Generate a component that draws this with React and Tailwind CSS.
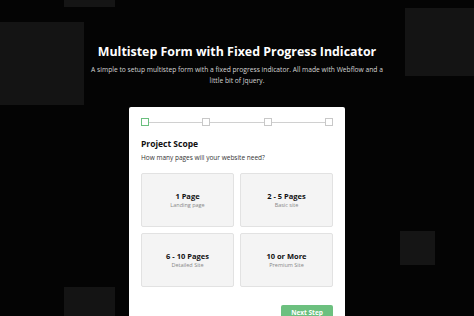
// multistep form landing preview
import React from 'react'

const options = [
    { title: '1 Page', sub: 'Landing page' },
    { title: '2 - 5 Pages', sub: 'Basic site' },
    { title: '6 - 10 Pages', sub: 'Detailed Site' },
    { title: '10 or More', sub: 'Premium Site' },
]

export default function App() {
    return (
        <div
            className="relative w-[474px] h-[316px] overflow-hidden bg-[#040404]"
            style={{ fontFamily: '"Open Sans", "Noto Sans", sans-serif' }}
        >
            {/* 배경 장식 사각형 */}
            <div className="absolute left-[64px] top-0 w-[51px] h-[7px] bg-[#151515]" />
            <div className="absolute left-0 top-[22px] w-[84px] h-[83px] bg-[#141414]" />
            <div className="absolute left-[405px] top-[8px] w-[69px] h-[68px] bg-[#141414]" />
            <div className="absolute left-[64px] top-[287px] w-[51px] h-[29px] bg-[#141414]" />
            <div className="absolute left-[400px] top-[231px] w-[35px] h-[34px] bg-[#151515]" />

            <div className="relative flex flex-col items-center pt-[41px]">
                <h1 className="text-[12.4px] font-bold text-white leading-[22px]">
                    Multistep Form with Fixed Progress Indicator
                </h1>
                <p className="mt-[1px] w-[292px] text-center text-[6.7px] leading-[11px] text-[#d4d4d4]">
                    A simple to setup multistep form with a fixed progress indicator. All made with Webflow and a little bit of Jquery.
                </p>

                <div className="mt-[21px] w-[216px] h-[230px] bg-white rounded-t-[2px] px-[12px] pt-[11px]">
                    {/* 진행 표시 */}
                    <div className="flex items-center">
                        <div className="w-[8px] h-[8px] border-[1.5px] border-[#6abf7e] shrink-0" />
                        <div className="flex-1 h-[1px] bg-[#d0d0d0]" />
                        <div className="w-[8px] h-[8px] border-[1.5px] border-[#c8c8c8] shrink-0" />
                        <div className="flex-1 h-[1px] bg-[#d0d0d0]" />
                        <div className="w-[8px] h-[8px] border-[1.5px] border-[#c8c8c8] shrink-0" />
                        <div className="flex-1 h-[1px] bg-[#d0d0d0]" />
                        <div className="w-[8px] h-[8px] border-[1.5px] border-[#c8c8c8] shrink-0" />
                    </div>

                    <h2 className="mt-[12px] text-[8.5px] font-bold text-[#111] leading-[12px]">
                        Project Scope
                    </h2>
                    <p className="mt-[3px] text-[6.5px] text-[#333] leading-[10px]">
                        How many pages will your website need?
                    </p>

                    <div className="mt-[10px] grid grid-cols-2 gap-[6px]">
                        {options.map((o) => (
                            <div
                                key={o.title}
                                className="h-[54px] bg-[#f4f4f4] border border-[#e2e2e2] rounded-[2px] flex flex-col items-center justify-center"
                            >
                                <span className="text-[7.5px] font-bold text-[#111] leading-[10px]">
                                    {o.title}
                                </span>
                                <span className="text-[5.5px] text-[#888] leading-[8px]">
                                    {o.sub}
                                </span>
                            </div>
                        ))}
                    </div>

                    <div className="mt-[18px] flex justify-end">
                        <button
                            type="button"
                            className="w-[52px] h-[20px] bg-[#6cc07f] rounded-[2px] text-[6.5px] font-bold text-white leading-[10px] pb-[6px] pt-[2px]"
                        >
                            Next Step
                        </button>
                    </div>
                </div>
            </div>
        </div>
    )
}
